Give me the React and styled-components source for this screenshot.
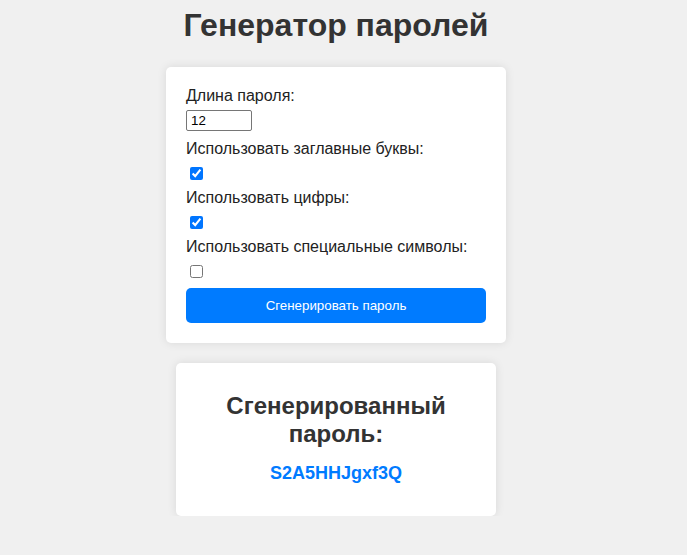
import { useState } from "react";
import styled, { createGlobalStyle } from "styled-components";

const GlobalStyle = createGlobalStyle`
    body {
        margin: 0;
        background-color: #f0f0f0;
        font-family: "Liberation Sans", Arial, sans-serif;
    }
`

export default function App() {
    const [length, setLength] = useState(12)
    const [upper, setUpper] = useState(true)
    const [digits, setDigits] = useState(true)
    const [special, setSpecial] = useState(false)
    const [password] = useState("S2A5HHJgxf3Q")

    return (
        <Page>
            <GlobalStyle />
            <Title>Генератор паролей</Title>

            <FormCard onSubmit={(e) => e.preventDefault()}>
                <Label htmlFor="length">Длина пароля:</Label>
                <NumberInput
                    id="length"
                    type="number"
                    value={length}
                    onChange={(e) => setLength(e.target.value)}
                />

                <Label htmlFor="upper">Использовать заглавные буквы:</Label>
                <Checkbox id="upper" type="checkbox" checked={upper} onChange={() => setUpper(!upper)} />

                <Label htmlFor="digits">Использовать цифры:</Label>
                <Checkbox id="digits" type="checkbox" checked={digits} onChange={() => setDigits(!digits)} />

                <Label htmlFor="special">Использовать специальные символы:</Label>
                <Checkbox id="special" type="checkbox" checked={special} onChange={() => setSpecial(!special)} />

                <GenerateButton type="submit">Сгенерировать пароль</GenerateButton>
            </FormCard>

            <ResultCard>
                <ResultTitle>Сгенерированный пароль:</ResultTitle>
                <Password>{password}</Password>
            </ResultCard>
        </Page>
    )
}

const Page = styled.div`
    width: 672px;
    padding-top: 7px;
    display: flex;
    flex-direction: column;
    align-items: center;
    box-sizing: border-box;
`
const Title = styled.h1`
    margin: 0 0 23px;
    color: #333;
    font-size: 32px;
    line-height: 37px;
    font-weight: bold;
`
const FormCard = styled.form`
    background-color: #fff;
    width: 340px;
    padding: 20px;
    border-radius: 5px;
    box-shadow: 0 0 10px rgba(0, 0, 0, 0.1);
    display: flex;
    flex-direction: column;
    align-items: flex-start;
    box-sizing: border-box;
`
const Label = styled.label`
    display: block;
    margin-bottom: 5px;
    color: #222;
    font-size: 16px;
    line-height: 18px;
`
const NumberInput = styled.input`
    width: 66px;
    height: 21px;
    margin: 0 0 9px;
    padding: 1px 4px;
    border: 1px solid #767676;
    border-radius: 2px;
    box-sizing: border-box;
    font-family: "Liberation Sans", Arial, sans-serif;
    font-size: 13.33px;
    color: #000;
    -moz-appearance: textfield;
    &::-webkit-inner-spin-button,
    &::-webkit-outer-spin-button {
        -webkit-appearance: none;
        margin: 0;
    }
`
const Checkbox = styled.input`
    width: 13px;
    height: 13px;
    margin: 4px 0 9px 4px;
`
const GenerateButton = styled.button`
    width: 100%;
    height: 35px;
    margin-top: 1px;
    background-color: #007bff;
    border: none;
    border-radius: 5px;
    color: #fff;
    font-family: "Liberation Sans", Arial, sans-serif;
    font-size: 13.33px;
    cursor: pointer;
`
const ResultCard = styled.div`
    background-color: #fff;
    width: 320px;
    margin-top: 20px;
    padding: 29px 20px 32px;
    border-radius: 5px;
    box-shadow: 0 0 10px rgba(0, 0, 0, 0.1);
    box-sizing: border-box;
    text-align: center;
`
const ResultTitle = styled.h2`
    margin: 0 0 15px;
    color: #333;
    font-size: 24px;
    line-height: 28px;
    font-weight: bold;
`
const Password = styled.p`
    margin: 0;
    color: #007bff;
    font-size: 18px;
    line-height: 21px;
    font-weight: bold;
`
